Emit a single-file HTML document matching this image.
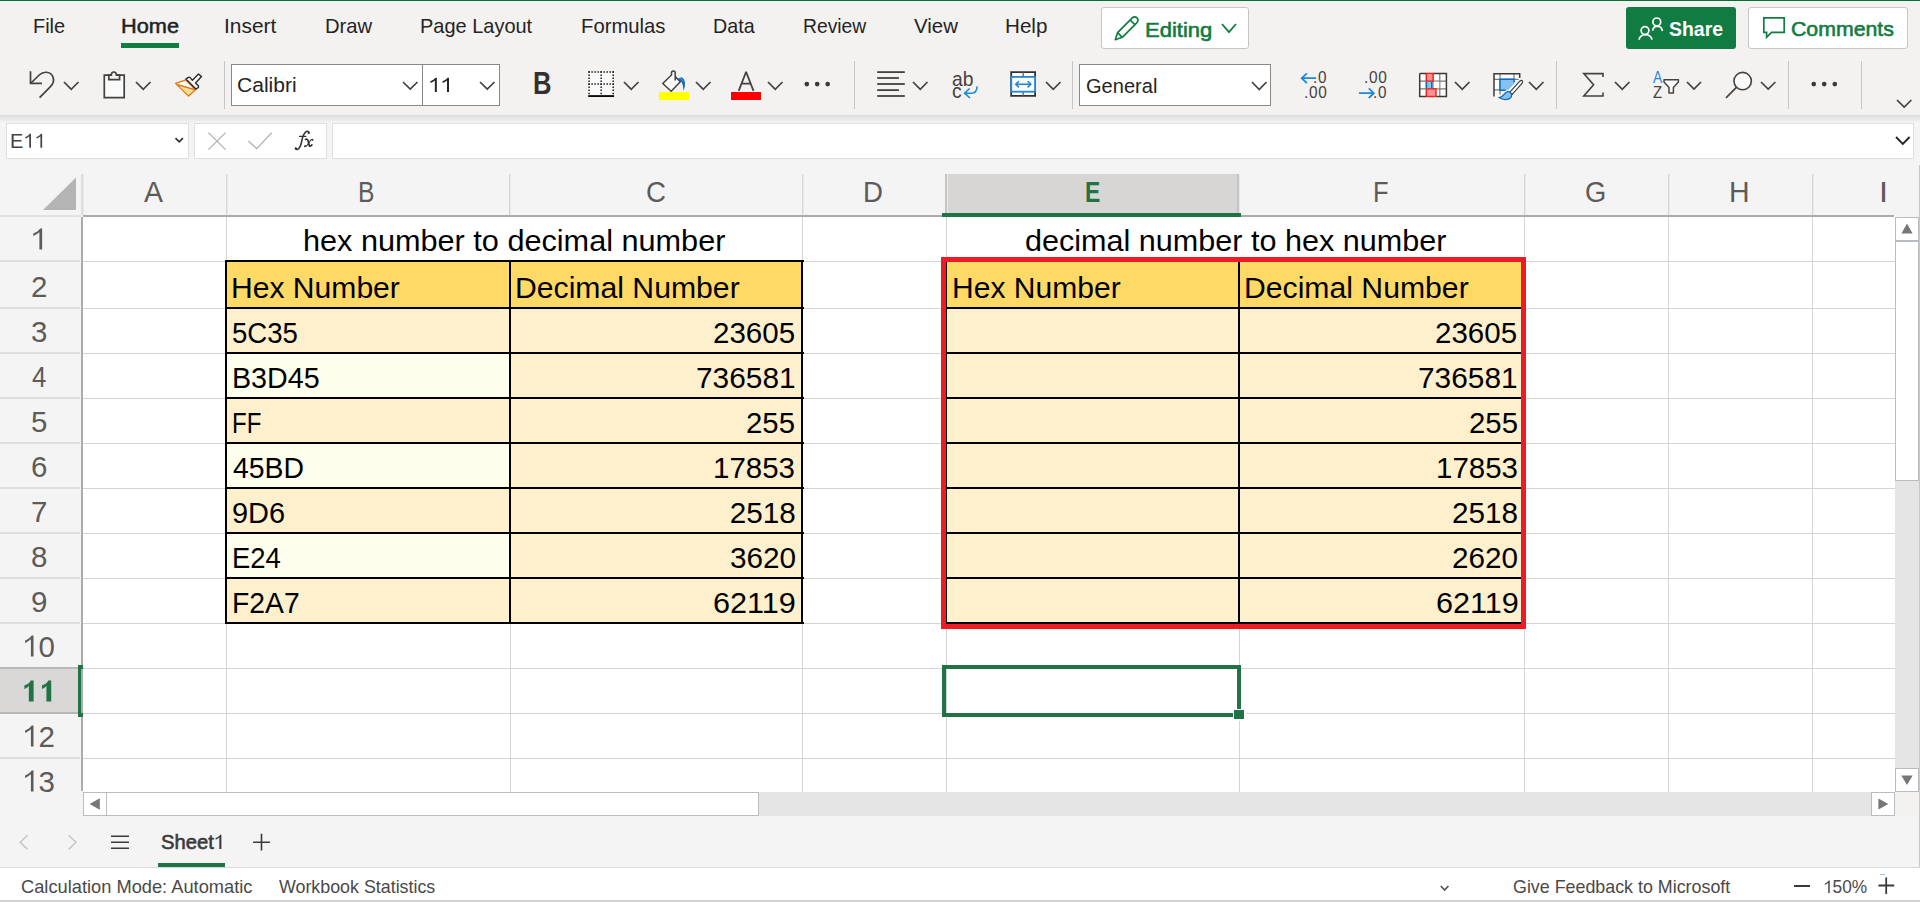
<!DOCTYPE html>
<html><head><meta charset="utf-8"><title>Excel</title>
<style>
html,body{margin:0;padding:0}
body{width:1920px;height:902px;overflow:hidden;position:relative;background:#f3f2f1;font-family:'Liberation Sans', sans-serif}
div,svg,span{position:absolute;display:block}
span{white-space:pre;line-height:1;transform-origin:0 0}
svg.o{position:static;display:inline-block;width:.556em;height:.8em;fill:currentColor;vertical-align:baseline}
</style></head>
<body>
<div style="left:0px;top:0px;width:1920px;height:1px;background:#00722f;"></div>
<div style="left:0px;top:1px;width:1920px;height:1px;background:#fcf7fc;"></div>
<div style="left:0px;top:2px;width:1920px;height:113px;background:#f3f2f1;"></div>
<div style="left:0px;top:115px;width:1920px;height:1px;background:#dadada;"></div>
<div style="left:0px;top:116px;width:1920px;height:7px;background:linear-gradient(#e1e1e1,#e6e6e6 30%,#f4f4f4);"></div>
<div style="left:0px;top:123px;width:1920px;height:51px;background:#f4f4f4;"></div>
<div style="left:121px;top:43px;width:58px;height:5px;background:#107c41;"></div>
<div style="left:1101px;top:7px;width:146px;height:40px;background:#fff;border:1px solid #c8c6c4;border-radius:3px"></div>
<svg style="left:1112px;top:14px;" width="30" height="28" viewBox="0 0 30 28"><g fill="none" stroke="#107c41" stroke-width="1.7" stroke-linejoin="round"><path d="M3.3 25.7 L5.6 18.6 L20.3 3.9 A3.3 3.3 0 0 1 25 8.6 L10.3 23.3 Z"/><path d="M5.6 18.6 L10.3 23.3"/><path d="M18.2 6 L22.9 10.7"/></g></svg>
<svg style="left:1219.9px;top:21.6px;" width="18" height="12.2" viewBox="0 0 18 12.2"><path d="M2 2 L9.0 10.2 L16 2" fill="none" stroke="#107c41" stroke-width="1.8"/></svg>
<div style="left:1626px;top:7px;width:110px;height:42px;background:#107c41;border-radius:3px"></div>
<svg style="left:1636px;top:14px;" width="30" height="28" viewBox="0 0 30 28"><g fill="none" stroke="#fff" stroke-width="1.7"><circle cx="20.8" cy="7.9" r="3.9"/><path d="M16.6 16.6 Q17.6 12.2 21.2 12.2 Q25.6 12.4 26.4 17"/><circle cx="9" cy="16.6" r="3.9"/><path d="M3.1 25.8 A6.4 5.2 0 0 1 15.9 25.8"/></g></svg>
<div style="left:1748px;top:7px;width:158px;height:40px;background:#fff;border:1px solid #c8c6c4;border-radius:3px"></div>
<svg style="left:1761px;top:15px;" width="28" height="26" viewBox="0 0 28 26"><path d="M2.8 2.8 H23.2 V17.3 H10.6 L5.6 22.3 V17.3 H2.8 Z" fill="none" stroke="#107c41" stroke-width="1.7"/></svg>
<svg style="left:27px;top:69px;" width="30" height="32" viewBox="0 0 30 32"><g fill="none" stroke="#444240" stroke-width="1.7"><path d="M3.5 2.3 V14.3 H15"/><path d="M4 14 L12.2 6 C16.5 2 23 2.3 25.6 7.2 C27.6 11.2 26 15.2 23 18.2 L12.6 28.6"/></g></svg>
<svg style="left:62.05px;top:79.95px;" width="18.5" height="11.3" viewBox="0 0 18.5 11.3"><path d="M2 2 L9.25 9.3 L16.5 2" fill="none" stroke="#444240" stroke-width="1.7"/></svg>
<svg style="left:101px;top:69px;" width="28" height="32" viewBox="0 0 28 32"><g stroke="#444240" stroke-width="1.7" fill="#fafafa"><path d="M3.3 6.2 H23.2 V28.6 H3.3 Z"/><path d="M7.8 10.7 V6.2 H10.3 A2.55 3.2 0 0 1 15.4 6.2 H18.6 V10.7 Z" fill="#f3f2f1"/></g></svg>
<svg style="left:134.05px;top:79.95px;" width="18.5" height="11.3" viewBox="0 0 18.5 11.3"><path d="M2 2 L9.25 9.3 L16.5 2" fill="none" stroke="#444240" stroke-width="1.7"/></svg>
<svg style="left:173px;top:71px;" width="32" height="28" viewBox="0 0 32 28"><path d="M2.6 12.3 L12.9 8.9 L22.5 18.8 L15.5 24.9 Z" fill="#fafafa" stroke="#e2760f" stroke-width="1.4" stroke-linejoin="round"/><path d="M6.4 15.4 L20.2 19.2 L15.5 23.9 Z" fill="#f9dc8a"/><path d="M4.6 13.8 L22 18.7" stroke="#e2760f" stroke-width="1.5" fill="none"/><path d="M12.9 7.9 L15.5 6.3 Q16.4 5.9 17.1 6.6 L19.4 9.3 L25.5 3 L28.5 5.6 L22.5 11.9 L25.3 14.7 Q25.8 15.6 25.3 16.5 L22.9 18.1 Z" fill="#fafafa" stroke="#2b2a29" stroke-width="1.4" stroke-linejoin="round"/></svg>
<div style="left:224px;top:61px;width:1px;height:47.5px;background:#c8c6c4;"></div>
<div style="left:231px;top:64px;width:267px;height:40px;background:#fff;border:1px solid #8a8886"></div>
<div style="left:422px;top:65px;width:1px;height:40px;background:#8a8886;"></div>
<svg style="left:400.95px;top:80.0px;" width="18.5" height="11" viewBox="0 0 18.5 11"><path d="M2 2 L9.25 9 L16.5 2" fill="none" stroke="#444240" stroke-width="1.7"/></svg>
<svg style="left:477.85px;top:80.0px;" width="18.5" height="11" viewBox="0 0 18.5 11"><path d="M2 2 L9.25 9 L16.5 2" fill="none" stroke="#444240" stroke-width="1.7"/></svg>
<svg style="left:586px;top:69px;" width="32" height="30" viewBox="0 0 32 30"><rect x="3.1" y="3.1" width="24.1" height="23" fill="#f9f9f9"/><g fill="none" stroke="#1f1e1d" stroke-width="1.5"><path d="M2.35 3.1 H27.95 M2.35 14.9 H27.95" stroke-dasharray="1.5 1.5125"/><path d="M3.1 2.35 V25.2 M15.15 2.35 V25.2 M27.2 2.35 V25.2" stroke-dasharray="1.5 1.543"/></g><path d="M2.2 27.06 H28.1" stroke="#000" stroke-width="1.8"/></svg>
<svg style="left:621.95px;top:79.85px;" width="18.5" height="11.3" viewBox="0 0 18.5 11.3"><path d="M2 2 L9.25 9.3 L16.5 2" fill="none" stroke="#444240" stroke-width="1.7"/></svg>
<svg style="left:657px;top:68px;" width="36" height="34" viewBox="0 0 36 34"><path d="M5.8 15.5 L14.5 7 H18.2 V8.6 L23.3 13.7 L14.2 23.2 Z" fill="#fafafa"/><path d="M18.2 8.6 L23.3 13.7 L14.2 23.2 L5.8 15.5 L14.5 7 V4.9 A1.85 1.85 0 0 1 18.2 4.9 V12.4" fill="none" stroke="#444240" stroke-width="1.5" stroke-linejoin="miter"/><path d="M20.7 11.2 C22.5 8.9 25.6 8.6 27.1 11.5 C28.7 15 27.8 19.5 26.6 22.8 C26.1 18.5 25.7 15.6 24.2 13.8 C23.2 12.6 22 12 20.7 11.2 Z" fill="#0f64c0"/><path d="M22.6 10.8 C24.2 10.4 25.6 11.4 26 13.6" fill="none" stroke="#5aa2e6" stroke-width="1"/><rect x="2" y="24.1" width="30.2" height="8" fill="#ffff00"/></svg>
<svg style="left:694.25px;top:79.85px;" width="18.5" height="11.3" viewBox="0 0 18.5 11.3"><path d="M2 2 L9.25 9.3 L16.5 2" fill="none" stroke="#444240" stroke-width="1.7"/></svg>
<svg style="left:735px;top:68px;" width="24" height="26" viewBox="0 0 24 26"><path d="M3.7 22.9 L11.1 3.9 L18.5 22.9 M6.4 15.7 H15.8" fill="none" stroke-linejoin="bevel" stroke="#444240" stroke-width="1.75"/></svg>
<div style="left:731px;top:92px;width:30px;height:8px;background:#ff0000;"></div>
<svg style="left:765.95px;top:79.85px;" width="18.5" height="11.3" viewBox="0 0 18.5 11.3"><path d="M2 2 L9.25 9.3 L16.5 2" fill="none" stroke="#444240" stroke-width="1.7"/></svg>
<svg style="left:800px;top:78px;" width="34" height="12" viewBox="0 0 34 12"><g fill="#3b3a39"><circle cx="6.8" cy="6.1" r="2.35"/><circle cx="17.2" cy="6.1" r="2.35"/><circle cx="27.7" cy="6.1" r="2.35"/></g></svg>
<div style="left:854px;top:61px;width:1px;height:47.5px;background:#c8c6c4;"></div>
<svg style="left:875px;top:69px;" width="32" height="30" viewBox="0 0 32 30"><g stroke="#444240" stroke-width="1.8"><path d="M2.2 3.1 H29.8"/><path d="M2.2 9 H23.9"/><path d="M2.2 15 H29.8"/><path d="M2.2 21.1 H23.9"/><path d="M2.2 27 H29.8"/></g></svg>
<svg style="left:911.25px;top:79.65px;" width="18.5" height="11.3" viewBox="0 0 18.5 11.3"><path d="M2 2 L9.25 9.3 L16.5 2" fill="none" stroke="#444240" stroke-width="1.7"/></svg>
<svg style="left:962px;top:84px;" width="18" height="16" viewBox="0 0 18 16"><path d="M2.6 9.2 H9.5 C13 9.2 15.2 6.6 15 2.4 M7.6 4.5 L2.6 9.2 L8 14" fill="none" stroke="#1e88d6" stroke-width="1.6"/></svg>
<svg style="left:1008px;top:69px;" width="30" height="30" viewBox="0 0 30 30"><path d="M3.2 3.2 H27.1 V26.9 H3.2 Z" fill="#fdfdfd" stroke="#323130" stroke-width="1.8"/><path d="M15.15 3.2 V26.9" stroke="#605e5c" stroke-width="1.3"/><rect x="3.25" y="7.9" width="23.8" height="14.8" fill="#fafafa" stroke="#1e88d6" stroke-width="1.8"/><path d="M8 15.3 H22.6 M11 12.2 L7.8 15.3 L11 18.4 M19.6 12.2 L22.8 15.3 L19.6 18.4" fill="none" stroke="#1e88d6" stroke-width="1.6"/></svg>
<svg style="left:1044.05px;top:79.65px;" width="18.5" height="11.3" viewBox="0 0 18.5 11.3"><path d="M2 2 L9.25 9.3 L16.5 2" fill="none" stroke="#444240" stroke-width="1.7"/></svg>
<div style="left:1072px;top:61px;width:1px;height:47.5px;background:#c8c6c4;"></div>
<div style="left:1079px;top:64px;width:190px;height:40px;background:#fff;border:1px solid #8a8886"></div>
<svg style="left:1249.75px;top:79.8px;" width="18.5" height="11.6" viewBox="0 0 18.5 11.6"><path d="M2 2 L9.25 9.6 L16.5 2" fill="none" stroke="#444240" stroke-width="1.7"/></svg>
<svg style="left:1299px;top:70px;" width="20" height="16" viewBox="0 0 20 16"><path d="M2.6 8.2 H17.1 M7.9 3.3 L2.7 8.2 L7.9 13.1" fill="none" stroke="#1e88d6" stroke-width="1.8"/></svg>
<svg style="left:1357px;top:85px;" width="20" height="16" viewBox="0 0 20 16"><path d="M2 8.2 H16.8 M11.8 3.4 L16.8 8.2 L11.8 13" fill="none" stroke="#1e88d6" stroke-width="1.8"/></svg>
<svg style="left:1417px;top:70px;" width="32" height="30" viewBox="0 0 32 30"><rect x="2.7" y="3.4" width="26.7" height="23.1" fill="#fdfdfd"/><g fill="none" stroke="#7a7a7a" stroke-width="1.2"><path d="M9.4 3.4 V26.5 M16.1 3.4 V26.5 M22.8 3.4 V26.5 M2.7 11.1 H29.4 M2.7 18.8 H29.4"/></g><rect x="16.8" y="11.8" width="5.4" height="6.3" fill="#fdfdfd"/><rect x="9.4" y="3.4" width="6.7" height="7.7" fill="#ff9097" stroke="#e8261c" stroke-width="1.4"/><rect x="9.4" y="18.8" width="9.6" height="7.7" fill="#ff9097" stroke="#e8261c" stroke-width="1.4"/><rect x="9.4" y="11.8" width="5.4" height="6.3" fill="#86c1f0"/><path d="M9.4 11.8 V18.1 M14.8 11.8 V18.1" stroke="#0f6cbd" stroke-width="1.5" fill="none"/><path d="M2.7 3.4 H9 M16.6 3.4 H29.4 V26.5 H19.4 M9 26.5 H2.7 V3.4" fill="none" stroke="#3b3a39" stroke-width="1.5"/></svg>
<svg style="left:1453.15px;top:79.85px;" width="18.5" height="11.3" viewBox="0 0 18.5 11.3"><path d="M2 2 L9.25 9.3 L16.5 2" fill="none" stroke="#444240" stroke-width="1.7"/></svg>
<svg style="left:1491px;top:70px;" width="34" height="32" viewBox="0 0 34 32"><path d="M3 3.7 H28.7 V9.3 H23 V20 H9 V26.5 H3 Z" fill="#fdfdfd"/><g fill="none" stroke="#7a7a7a" stroke-width="1.2"><path d="M9 3.7 V24.6 M23 3.7 V9 M3 9.3 H27.6 M3 19.9 H9"/></g><path d="M9 9.3 H23.1 V14 L17 20.25 H9 Z" fill="#86c1f0"/><path d="M23.1 12.6 V9.3 H9 V20.25 H14.6" fill="none" stroke="#0f6cbd" stroke-width="1.5"/><path d="M3 26.5 V3.7 H28.7 V8" fill="none" stroke="#3b3a39" stroke-width="1.5"/><path d="M31 10.6 L19.4 23.6" stroke="#f3f2f1" stroke-width="5" stroke-linecap="round"/><path d="M30.9 10.5 Q32.2 11.3 31 13.4 L21.2 24.4 L18.6 22.4 L28.6 11.4 Q30 10 30.9 10.5 Z" fill="#fdfdfd" stroke="#3b3a39" stroke-width="1.1" stroke-linejoin="round"/><path d="M16.6 21.6 C13 22.4 13.6 26.4 8.2 27.6 C12.6 31 20.6 30 20.6 25 C20.6 23.2 18.6 21.4 16.6 21.6 Z" fill="#86c1f0" stroke="#0f6cbd" stroke-width="1.3"/></svg>
<svg style="left:1527.15px;top:79.85px;" width="18.5" height="11.3" viewBox="0 0 18.5 11.3"><path d="M2 2 L9.25 9.3 L16.5 2" fill="none" stroke="#444240" stroke-width="1.7"/></svg>
<div style="left:1556px;top:61px;width:1px;height:47.5px;background:#c8c6c4;"></div>
<svg style="left:1580px;top:70px;" width="28" height="30" viewBox="0 0 28 30"><path d="M23 7 V3.6 H3.8 L13.6 14.8 L3.8 26 H23 V22.6" fill="none" stroke="#444240" stroke-width="1.6"/></svg>
<svg style="left:1612.95px;top:79.85px;" width="18.5" height="11.3" viewBox="0 0 18.5 11.3"><path d="M2 2 L9.25 9.3 L16.5 2" fill="none" stroke="#444240" stroke-width="1.7"/></svg>
<svg style="left:1661px;top:76px;" width="20" height="20" viewBox="0 0 20 20"><path d="M3 3.8 H17.4 V6 L12.4 11.4 V17 H8 V11.4 L3 6 Z" fill="#fafafa" stroke="#444240" stroke-width="1.5" stroke-linejoin="round"/></svg>
<svg style="left:1685.2px;top:79.9px;" width="18" height="11" viewBox="0 0 18 11"><path d="M2 2 L9.0 9 L16 2" fill="none" stroke="#444240" stroke-width="1.7"/></svg>
<svg style="left:1723px;top:69px;" width="32" height="32" viewBox="0 0 32 32"><circle cx="19.65" cy="12.1" r="8.7" fill="#fafafa" stroke="#444240" stroke-width="1.6"/><path d="M13.4 18.4 L3 28.8" stroke="#444240" stroke-width="1.7"/></svg>
<svg style="left:1759.1px;top:79.9px;" width="18.4" height="11" viewBox="0 0 18.4 11"><path d="M2 2 L9.2 9 L16.4 2" fill="none" stroke="#444240" stroke-width="1.7"/></svg>
<div style="left:1788px;top:61px;width:1px;height:47.5px;background:#c8c6c4;"></div>
<svg style="left:1807px;top:78px;" width="34" height="12" viewBox="0 0 34 12"><g fill="#3b3a39"><circle cx="6.75" cy="6.1" r="2.35"/><circle cx="17.2" cy="6.1" r="2.35"/><circle cx="27.8" cy="6.1" r="2.35"/></g></svg>
<div style="left:1861px;top:61px;width:1px;height:47.5px;background:#c8c6c4;"></div>
<svg style="left:1895.0px;top:98.0px;" width="18.4" height="11" viewBox="0 0 18.4 11"><path d="M2 2 L9.2 9 L16.4 2" fill="none" stroke="#444240" stroke-width="1.7"/></svg>
<div style="left:6px;top:123px;width:181px;height:34px;background:#fff;border:1px solid #e1dfdd"></div>
<svg style="left:173px;top:135px;" width="12" height="10" viewBox="0 0 12 10"><path d="M2.5 3.2 L6.2 6.9 L9.9 3.2" fill="none" stroke="#323130" stroke-width="1.7"/></svg>
<div style="left:194px;top:123px;width:131px;height:34px;background:#fff;border:1px solid #e1dfdd"></div>
<svg style="left:206px;top:130px;" width="22" height="22" viewBox="0 0 22 22"><path d="M2.4 2.6 L19.6 19.6 M19.6 2.6 L2.4 19.6" stroke="#b3b0ad" stroke-width="1.3" fill="none"/></svg>
<svg style="left:246px;top:130px;" width="28" height="22" viewBox="0 0 28 22"><path d="M2.4 11 L10.8 18.6 L25.6 2.8" stroke="#b3b0ad" stroke-width="1.3" fill="none"/></svg>
<svg style="left:292px;top:128px;" width="24" height="26" viewBox="0 0 24 26"><g fill="none" stroke="#323130" stroke-linecap="round" stroke-linejoin="round"><path d="M16.9 4.7 C16.5 3.2 15.1 2.9 14.1 3.7 C12.6 4.9 11.5 7 10.9 8.6 C10.2 10.6 9.9 12.6 9.3 15 C8.6 18 7.6 20.3 5.8 21.2 C4.7 21.7 3.8 21.2 3.5 20.5" stroke-width="1.55"/><path d="M7.5 8.3 H13.9" stroke-width="1.2"/><path d="M13.5 11.4 C14.7 10.8 15.6 11.2 16 12.5 L17.2 17.3 C17.5 18.6 18.5 18.5 19.9 16.9" stroke-width="1.7"/><path d="M20.6 11.7 C19.6 11.1 18.8 11.8 18.2 12.8 L15.6 16.7 C14.8 17.8 13.9 18.8 12.9 18.3" stroke-width="1.1"/></g><g fill="#323130"><circle cx="16.7" cy="4.9" r="1.05"/><circle cx="3.9" cy="20.5" r="1.15"/><circle cx="20.5" cy="11.8" r="0.95"/><circle cx="13" cy="18.2" r="0.95"/></g></svg>
<div style="left:332px;top:123px;width:1579.5px;height:34px;background:#fff;border:1px solid #e1dfdd"></div>
<svg style="left:1894.3px;top:134.8px;" width="17.6" height="11" viewBox="0 0 17.6 11"><path d="M2 2 L8.8 9 L15.6 2" fill="none" stroke="#252423" stroke-width="1.8"/></svg>
<div style="left:0px;top:174px;width:1920px;height:43px;background:#f4f4f4;"></div>
<div style="left:0px;top:217px;width:81px;height:575px;background:#f4f4f4;"></div>
<div style="left:83px;top:217px;width:1812px;height:575px;background:#fff;"></div>
<svg style="left:40px;top:175px;" width="40" height="38" viewBox="0 0 40 38"><path d="M36 2.4 V35 H3 Z" fill="#b4b4b4"/></svg>
<div style="left:947px;top:174px;width:291px;height:39px;background:#d7d6d5;"></div>
<div style="left:0px;top:669px;width:78px;height:43px;background:#d9d8d7;"></div>
<div style="left:82px;top:174px;width:1px;height:41px;background:#d6d6d6;"></div>
<div style="left:83px;top:174px;width:1px;height:41px;background:#e9e9e9;"></div>
<div style="left:226px;top:174px;width:1px;height:41px;background:#d6d6d6;"></div>
<div style="left:227px;top:174px;width:1px;height:41px;background:#e9e9e9;"></div>
<div style="left:509px;top:174px;width:1px;height:41px;background:#d6d6d6;"></div>
<div style="left:510px;top:174px;width:1px;height:41px;background:#e9e9e9;"></div>
<div style="left:802px;top:174px;width:1px;height:41px;background:#d6d6d6;"></div>
<div style="left:803px;top:174px;width:1px;height:41px;background:#e9e9e9;"></div>
<div style="left:946px;top:174px;width:1px;height:41px;background:#d6d6d6;"></div>
<div style="left:947px;top:174px;width:1px;height:41px;background:#e9e9e9;"></div>
<div style="left:1238px;top:174px;width:1px;height:41px;background:#d6d6d6;"></div>
<div style="left:1239px;top:174px;width:1px;height:41px;background:#e9e9e9;"></div>
<div style="left:1524px;top:174px;width:1px;height:41px;background:#d6d6d6;"></div>
<div style="left:1525px;top:174px;width:1px;height:41px;background:#e9e9e9;"></div>
<div style="left:1668px;top:174px;width:1px;height:41px;background:#d6d6d6;"></div>
<div style="left:1669px;top:174px;width:1px;height:41px;background:#e9e9e9;"></div>
<div style="left:1812px;top:174px;width:1px;height:41px;background:#d6d6d6;"></div>
<div style="left:1813px;top:174px;width:1px;height:41px;background:#e9e9e9;"></div>
<div style="left:945px;top:174px;width:2px;height:39px;background:#c4c4c4;"></div>
<div style="left:1237px;top:174px;width:2px;height:39px;background:#c4c4c4;"></div>
<div style="left:0px;top:260px;width:80px;height:2px;background:#dedede;"></div>
<div style="left:0px;top:307px;width:80px;height:2px;background:#dedede;"></div>
<div style="left:0px;top:352px;width:80px;height:2px;background:#dedede;"></div>
<div style="left:0px;top:397px;width:80px;height:2px;background:#dedede;"></div>
<div style="left:0px;top:442px;width:80px;height:2px;background:#dedede;"></div>
<div style="left:0px;top:487px;width:80px;height:2px;background:#dedede;"></div>
<div style="left:0px;top:532px;width:80px;height:2px;background:#dedede;"></div>
<div style="left:0px;top:577px;width:80px;height:2px;background:#dedede;"></div>
<div style="left:0px;top:622px;width:80px;height:2px;background:#dedede;"></div>
<div style="left:0px;top:667px;width:80px;height:2px;background:#dedede;"></div>
<div style="left:0px;top:712px;width:80px;height:2px;background:#dedede;"></div>
<div style="left:0px;top:757px;width:80px;height:2px;background:#dedede;"></div>
<div style="left:226px;top:217px;width:1px;height:575px;background:#d4d4d4;"></div>
<div style="left:510px;top:262px;width:1px;height:530px;background:#d4d4d4;"></div>
<div style="left:802px;top:217px;width:1px;height:575px;background:#d4d4d4;"></div>
<div style="left:946px;top:217px;width:1px;height:575px;background:#d4d4d4;"></div>
<div style="left:1239px;top:262px;width:1px;height:530px;background:#d4d4d4;"></div>
<div style="left:1524px;top:217px;width:1px;height:575px;background:#d4d4d4;"></div>
<div style="left:1668px;top:217px;width:1px;height:575px;background:#d4d4d4;"></div>
<div style="left:1812px;top:217px;width:1px;height:575px;background:#d4d4d4;"></div>
<div style="left:83px;top:261px;width:1812px;height:1px;background:#d4d4d4;"></div>
<div style="left:83px;top:308px;width:1812px;height:1px;background:#d4d4d4;"></div>
<div style="left:83px;top:353px;width:1812px;height:1px;background:#d4d4d4;"></div>
<div style="left:83px;top:398px;width:1812px;height:1px;background:#d4d4d4;"></div>
<div style="left:83px;top:443px;width:1812px;height:1px;background:#d4d4d4;"></div>
<div style="left:83px;top:488px;width:1812px;height:1px;background:#d4d4d4;"></div>
<div style="left:83px;top:533px;width:1812px;height:1px;background:#d4d4d4;"></div>
<div style="left:83px;top:578px;width:1812px;height:1px;background:#d4d4d4;"></div>
<div style="left:83px;top:623px;width:1812px;height:1px;background:#d4d4d4;"></div>
<div style="left:83px;top:668px;width:1812px;height:1px;background:#d4d4d4;"></div>
<div style="left:83px;top:713px;width:1812px;height:1px;background:#d4d4d4;"></div>
<div style="left:83px;top:758px;width:1812px;height:1px;background:#d4d4d4;"></div>
<div style="left:83px;top:215px;width:1811px;height:2px;background:#ababab;"></div>
<div style="left:0px;top:215px;width:81px;height:2px;background:#e2e2e2;"></div>
<div style="left:81px;top:217px;width:2px;height:574px;background:#ababab;"></div>
<div style="left:81px;top:174px;width:2px;height:41px;background:#dedede;"></div>
<div style="left:942px;top:213px;width:299px;height:4px;background:#217346;"></div>
<div style="left:0px;top:667px;width:78px;height:2px;background:#b8b8b8;"></div>
<div style="left:0px;top:712px;width:78px;height:2px;background:#b8b8b8;"></div>
<div style="left:78px;top:665px;width:5px;height:4px;background:#217346;"></div>
<div style="left:78px;top:713px;width:5px;height:4px;background:#217346;"></div>
<div style="left:78px;top:669px;width:3.4px;height:44px;background:#217346;"></div>
<div style="left:226px;top:261px;width:576px;height:47px;background:#ffd966;"></div>
<div style="left:226px;top:308px;width:576px;height:315px;background:#fff0cd;"></div>
<div style="left:226px;top:353px;width:284px;height:45px;background:#fefeec;"></div>
<div style="left:226px;top:443px;width:284px;height:45px;background:#fefeec;"></div>
<div style="left:226px;top:533px;width:284px;height:45px;background:#fefeec;"></div>
<div style="left:225px;top:260px;width:2px;height:364px;background:#000;"></div>
<div style="left:509px;top:260px;width:2px;height:364px;background:#000;"></div>
<div style="left:801px;top:260px;width:2px;height:364px;background:#000;"></div>
<div style="left:225px;top:260px;width:579px;height:2px;background:#000;"></div>
<div style="left:225px;top:307px;width:579px;height:2px;background:#000;"></div>
<div style="left:225px;top:352px;width:579px;height:2px;background:#000;"></div>
<div style="left:225px;top:397px;width:579px;height:2px;background:#000;"></div>
<div style="left:225px;top:442px;width:579px;height:2px;background:#000;"></div>
<div style="left:225px;top:487px;width:579px;height:2px;background:#000;"></div>
<div style="left:225px;top:532px;width:579px;height:2px;background:#000;"></div>
<div style="left:225px;top:577px;width:579px;height:2px;background:#000;"></div>
<div style="left:225px;top:622px;width:579px;height:2px;background:#000;"></div>
<div style="left:946px;top:261px;width:578px;height:47px;background:#ffd966;"></div>
<div style="left:946px;top:308px;width:578px;height:315px;background:#fff0cd;"></div>
<div style="left:945px;top:260px;width:2px;height:364px;background:#000;"></div>
<div style="left:1238px;top:260px;width:2px;height:364px;background:#000;"></div>
<div style="left:1523px;top:260px;width:2px;height:364px;background:#000;"></div>
<div style="left:945px;top:260px;width:581px;height:2px;background:#000;"></div>
<div style="left:945px;top:307px;width:581px;height:2px;background:#000;"></div>
<div style="left:945px;top:352px;width:581px;height:2px;background:#000;"></div>
<div style="left:945px;top:397px;width:581px;height:2px;background:#000;"></div>
<div style="left:945px;top:442px;width:581px;height:2px;background:#000;"></div>
<div style="left:945px;top:487px;width:581px;height:2px;background:#000;"></div>
<div style="left:945px;top:532px;width:581px;height:2px;background:#000;"></div>
<div style="left:945px;top:577px;width:581px;height:2px;background:#000;"></div>
<div style="left:945px;top:622px;width:581px;height:2px;background:#000;"></div>
<div style="left:941px;top:257px;width:585px;height:5px;background:#ed1c24;"></div>
<div style="left:941px;top:624px;width:585px;height:5px;background:#ed1c24;"></div>
<div style="left:941px;top:257px;width:5px;height:372px;background:#ed1c24;"></div>
<div style="left:1521px;top:257px;width:5px;height:372px;background:#ed1c24;"></div>
<div style="left:942px;top:665px;width:291px;height:44px;background:transparent;border:4px solid #217346;z-index:6"></div>
<div style="left:1232.5px;top:708.5px;width:13px;height:12px;background:#fff;z-index:7"></div>
<div style="left:1234px;top:710px;width:10px;height:9px;background:#217346;z-index:8"></div>
<div style="left:1895px;top:217px;width:25px;height:575px;background:#f4f4f4;"></div>
<div style="left:1895px;top:241px;width:24px;height:528px;background:#e5e5e5;"></div>
<div style="left:1895px;top:217px;width:22px;height:22px;background:#fff;border:1px solid #b9bdc1"></div>
<svg style="left:1899px;top:221px;" width="16" height="16" viewBox="0 0 16 16"><path d="M8 2.4 L13.6 12.4 H2.4 Z" fill="#777"/></svg>
<div style="left:1895px;top:241px;width:22px;height:238px;background:#fff;border:1px solid #b9bdc1"></div>
<div style="left:1895px;top:768px;width:22px;height:22px;background:#fff;border:1px solid #b9bdc1"></div>
<svg style="left:1899px;top:772px;" width="16" height="16" viewBox="0 0 16 16"><path d="M2.3 3.4 H13.7 L8 13 Z" fill="#777"/></svg>
<div style="left:1919px;top:165px;width:1px;height:702px;background:#c8c8c8;z-index:9;"></div>
<div style="left:83px;top:792px;width:1812px;height:24px;background:#e5e5e5;"></div>
<div style="left:83px;top:792px;width:22px;height:22px;background:#fff;border:1px solid #b9bdc1"></div>
<svg style="left:87px;top:796px;" width="16" height="16" viewBox="0 0 16 16"><path d="M2.6 8 L12.8 2.3 V13.7 Z" fill="#777"/></svg>
<div style="left:106px;top:792px;width:651px;height:22px;background:#fff;border:1px solid #b9bdc1"></div>
<div style="left:1871px;top:792px;width:22px;height:22px;background:#fff;border:1px solid #b9bdc1"></div>
<svg style="left:1875px;top:796px;" width="16" height="16" viewBox="0 0 16 16"><path d="M13.4 8 L3.4 2.4 V13.6 Z" fill="#777"/></svg>
<div style="left:0px;top:792px;width:83px;height:24px;background:#f4f4f4;z-index:6;"></div>
<div style="left:0px;top:816px;width:1920px;height:51px;background:#f4f4f4;z-index:6;"></div>
<div style="left:0px;top:867px;width:1920px;height:1px;background:#d9d9d9;z-index:6;"></div>
<div style="left:0px;top:868px;width:1920px;height:32px;background:#fff;z-index:6;"></div>
<div style="left:0px;top:900px;width:1920px;height:2px;background:#d2d2d2;z-index:6;"></div>
<svg style="left:17px;top:832px;z-index:7;" width="14" height="20" viewBox="0 0 14 20"><path d="M10.6 3.2 L3.2 10.3 L10.6 17.4" fill="none" stroke="#c8c6c4" stroke-width="1.5"/></svg>
<svg style="left:65px;top:832px;z-index:7;" width="14" height="20" viewBox="0 0 14 20"><path d="M3.6 3.2 L11 10.3 L3.6 17.4" fill="none" stroke="#c8c6c4" stroke-width="1.5"/></svg>
<svg style="left:109px;top:832px;z-index:7;" width="22" height="20" viewBox="0 0 22 20"><path d="M2 4.2 H20 M2 10.2 H20 M2 16.2 H20" stroke="#3b3a39" stroke-width="1.6"/></svg>
<div style="left:158px;top:863px;width:67px;height:4px;background:#217346;z-index:7;"></div>
<svg style="left:251px;top:832px;z-index:7;" width="22" height="22" viewBox="0 0 22 22"><path d="M10.5 1.8 V18.6 M2.1 10.2 H18.9" stroke="#3b3a39" stroke-width="1.6"/></svg>
<svg style="left:1438px;top:883px;z-index:7;" width="14" height="12" viewBox="0 0 14 12"><path d="M2.8 3 L6.6 7 L10.4 3" fill="none" stroke="#55534f" stroke-width="1.7"/></svg>
<div style="left:1794px;top:885px;width:16px;height:2px;background:#3b3a39;z-index:7;"></div>
<svg style="left:1877px;top:876px;z-index:7;" width="20" height="20" viewBox="0 0 20 20"><path d="M9.2 1.6 V17.9 M1.4 9.5 H17.2" stroke="#3b3a39" stroke-width="1.8"/></svg>
<div style="left:1880px;top:874px;width:5px;height:1px;background:#9cc8ef;z-index:7;"></div>
<span style="left:33.05px;top:15.22px;font-size:21px;color:#252423;z-index:5;transform:scaleX(0.9500);">File</span>
<span style="left:120.96px;top:15.22px;font-size:21px;color:#201f1e;z-index:5;-webkit-text-stroke:0.5px #201f1e;transform:scaleX(1.0364);">Home</span>
<span style="left:224.26px;top:15.22px;font-size:21px;color:#252423;z-index:5;transform:scaleX(0.9951);">Insert</span>
<span style="left:324.79px;top:15.22px;font-size:21px;color:#252423;z-index:5;transform:scaleX(0.9635);">Draw</span>
<span style="left:420.30px;top:15.22px;font-size:21px;color:#252423;z-index:5;transform:scaleX(0.9509);">Page Layout</span>
<span style="left:581.03px;top:15.22px;font-size:21px;color:#252423;z-index:5;transform:scaleX(0.9651);">Formulas</span>
<span style="left:712.81px;top:15.22px;font-size:21px;color:#252423;z-index:5;transform:scaleX(0.9375);">Data</span>
<span style="left:803.33px;top:15.22px;font-size:21px;color:#252423;z-index:5;transform:scaleX(0.9191);">Review</span>
<span style="left:914.25px;top:15.22px;font-size:21px;color:#252423;z-index:5;transform:scaleX(0.9722);">View</span>
<span style="left:1005.27px;top:15.22px;font-size:21px;color:#252423;z-index:5;transform:scaleX(0.9821);">Help</span>
<span style="left:1144.95px;top:19.32px;font-size:21px;color:#107c41;z-index:5;-webkit-text-stroke:0.6px #107c41;transform:scaleX(1.0484);">Editing</span>
<span style="left:1668.75px;top:19.45px;font-size:20.5px;color:#fff;z-index:5;font-weight:700;transform:scaleX(0.9482);">Share</span>
<span style="left:1791.46px;top:19.45px;font-size:20.5px;color:#107c41;z-index:5;-webkit-text-stroke:0.6px #107c41;transform:scaleX(1.0378);">Comments</span>
<span style="left:236.97px;top:75.15px;font-size:20.5px;color:#252423;z-index:5;transform:scaleX(1.0268);">Calibri</span>
<span style="left:427.99px;top:75.15px;font-size:20.5px;color:#252423;z-index:5;transform:scaleX(1.1059);"><svg class="o" viewBox="0 -0.8 0.556 0.8"><path d="M0.390 0V-0.716H0.328C0.280 -0.64 0.200 -0.585 0.105 -0.548V-0.463C0.170 -0.488 0.250 -0.533 0.302 -0.585V0Z"/></svg><svg class="o" viewBox="0 -0.8 0.556 0.8"><path d="M0.390 0V-0.716H0.328C0.280 -0.64 0.200 -0.585 0.105 -0.548V-0.463C0.170 -0.488 0.250 -0.533 0.302 -0.585V0Z"/></svg></span>
<span style="left:532.63px;top:68.00px;font-size:30.6px;color:#323130;z-index:5;font-weight:700;transform:scaleX(0.8368);">B</span>
<span style="left:952.15px;top:69.66px;font-size:19.3px;color:#444240;z-index:5;transform:scaleX(0.9975);">ab</span>
<span style="left:952.00px;top:81.76px;font-size:19.3px;color:#444240;z-index:5;">c</span>
<span style="left:1085.92px;top:75.50px;font-size:20.5px;color:#252423;z-index:5;transform:scaleX(0.9789);">General</span>
<span style="left:1313.20px;top:69.31px;font-size:17px;color:#444240;z-index:5;letter-spacing:0.8px;transform:scaleX(0.9000);">.0</span>
<span style="left:1304.10px;top:84.11px;font-size:17px;color:#444240;z-index:5;letter-spacing:0.8px;transform:scaleX(0.9042);">.00</span>
<span style="left:1364.19px;top:69.31px;font-size:17px;color:#444240;z-index:5;letter-spacing:0.8px;transform:scaleX(0.9062);">.00</span>
<span style="left:1373.40px;top:84.11px;font-size:17px;color:#444240;z-index:5;letter-spacing:0.8px;transform:scaleX(0.8964);">.0</span>
<span style="left:1653.30px;top:70.38px;font-size:16.8px;color:#2b88d8;z-index:5;transform:scaleX(0.8273);">A</span>
<span style="left:1653.30px;top:85.38px;font-size:16.8px;color:#444240;z-index:5;transform:scaleX(0.8900);">Z</span>
<span style="left:10.23px;top:131.81px;font-size:19.6px;color:#444;z-index:5;transform:scaleX(1.0161);">E<svg class="o" viewBox="0 -0.8 0.556 0.8"><path d="M0.390 0V-0.716H0.328C0.280 -0.64 0.200 -0.585 0.105 -0.548V-0.463C0.170 -0.488 0.250 -0.533 0.302 -0.585V0Z"/></svg><svg class="o" viewBox="0 -0.8 0.556 0.8"><path d="M0.390 0V-0.716H0.328C0.280 -0.64 0.200 -0.585 0.105 -0.548V-0.463C0.170 -0.488 0.250 -0.533 0.302 -0.585V0Z"/></svg></span>
<span style="left:144.00px;top:177.41px;font-size:30px;color:#5d5b59;z-index:5;transform:scaleX(0.9500);">A</span>
<span style="left:358.35px;top:177.41px;font-size:30px;color:#5d5b59;z-index:5;transform:scaleX(0.8235);">B</span>
<span style="left:645.58px;top:177.41px;font-size:30px;color:#5d5b59;z-index:5;transform:scaleX(0.9211);">C</span>
<span style="left:863.16px;top:177.41px;font-size:30px;color:#5d5b59;z-index:5;transform:scaleX(0.9211);">D</span>
<span style="left:1084.72px;top:177.20px;font-size:30px;color:#217346;z-index:5;font-weight:700;transform:scaleX(0.7647);">E</span>
<span style="left:1372.81px;top:177.41px;font-size:30px;color:#5d5b59;z-index:5;transform:scaleX(0.8467);">F</span>
<span style="left:1585.49px;top:177.41px;font-size:30px;color:#5d5b59;z-index:5;transform:scaleX(0.9100);">G</span>
<span style="left:1729.30px;top:177.41px;font-size:30px;color:#5d5b59;z-index:5;transform:scaleX(0.9500);">H</span>
<span style="left:1878.50px;top:177.41px;font-size:30px;color:#5d5b59;z-index:5;transform:scaleX(1.0833);">I</span>
<span style="left:30.33px;top:224.53px;font-size:29.5px;color:#5d5b59;z-index:5;transform:scaleX(1.0556);"><svg class="o" viewBox="0 -0.8 0.556 0.8"><path d="M0.390 0V-0.716H0.328C0.280 -0.64 0.200 -0.585 0.105 -0.548V-0.463C0.170 -0.488 0.250 -0.533 0.302 -0.585V0Z"/></svg></span>
<span style="left:31.00px;top:271.53px;font-size:29.5px;color:#5d5b59;z-index:5;">2</span>
<span style="left:31.00px;top:316.53px;font-size:29.5px;color:#5d5b59;z-index:5;">3</span>
<span style="left:32.00px;top:361.53px;font-size:29.5px;color:#5d5b59;z-index:5;transform:scaleX(0.8750);">4</span>
<span style="left:31.00px;top:406.53px;font-size:29.5px;color:#5d5b59;z-index:5;">5</span>
<span style="left:31.00px;top:451.53px;font-size:29.5px;color:#5d5b59;z-index:5;">6</span>
<span style="left:31.00px;top:496.53px;font-size:29.5px;color:#5d5b59;z-index:5;">7</span>
<span style="left:31.00px;top:541.53px;font-size:29.5px;color:#5d5b59;z-index:5;">8</span>
<span style="left:31.00px;top:586.53px;font-size:29.5px;color:#5d5b59;z-index:5;">9</span>
<span style="left:22.00px;top:631.53px;font-size:29.5px;color:#5d5b59;z-index:5;"><svg class="o" viewBox="0 -0.8 0.556 0.8"><path d="M0.390 0V-0.716H0.328C0.280 -0.64 0.200 -0.585 0.105 -0.548V-0.463C0.170 -0.488 0.250 -0.533 0.302 -0.585V0Z"/></svg>0</span>
<span style="left:20.00px;top:676.93px;font-size:29.5px;color:#217346;z-index:5;font-weight:700;transform:scaleX(1.1000);"><svg class="o" viewBox="0 -0.8 0.556 0.8"><path d="M0.420 0V-0.716H0.328C0.310 -0.64 0.230 -0.585 0.135 -0.548V-0.428C0.200 -0.453 0.280 -0.498 0.272 -0.550V0Z"/></svg><svg class="o" viewBox="0 -0.8 0.556 0.8"><path d="M0.420 0V-0.716H0.328C0.310 -0.64 0.230 -0.585 0.135 -0.548V-0.428C0.200 -0.453 0.280 -0.498 0.272 -0.550V0Z"/></svg></span>
<span style="left:22.00px;top:721.53px;font-size:29.5px;color:#5d5b59;z-index:5;"><svg class="o" viewBox="0 -0.8 0.556 0.8"><path d="M0.390 0V-0.716H0.328C0.280 -0.64 0.200 -0.585 0.105 -0.548V-0.463C0.170 -0.488 0.250 -0.533 0.302 -0.585V0Z"/></svg>2</span>
<span style="left:22.00px;top:766.53px;font-size:29.5px;color:#5d5b59;z-index:5;"><svg class="o" viewBox="0 -0.8 0.556 0.8"><path d="M0.390 0V-0.716H0.328C0.280 -0.64 0.200 -0.585 0.105 -0.548V-0.463C0.170 -0.488 0.250 -0.533 0.302 -0.585V0Z"/></svg>3</span>
<span style="left:303.34px;top:225.86px;font-size:29.7px;color:#000;z-index:5;transform:scaleX(1.0322);">hex number to decimal number</span>
<span style="left:1025.27px;top:225.86px;font-size:29.7px;color:#000;z-index:5;transform:scaleX(1.0297);">decimal number to hex number</span>
<span style="left:231.47px;top:272.86px;font-size:29.7px;color:#000;z-index:5;transform:scaleX(1.0134);">Hex Number</span>
<span style="left:515.37px;top:272.86px;font-size:29.7px;color:#000;z-index:5;transform:scaleX(1.0164);">Decimal Number</span>
<span style="left:951.68px;top:272.86px;font-size:29.7px;color:#000;z-index:5;transform:scaleX(1.0122);">Hex Number</span>
<span style="left:1244.47px;top:272.86px;font-size:29.7px;color:#000;z-index:5;transform:scaleX(1.0164);">Decimal Number</span>
<span style="left:232.27px;top:317.86px;font-size:29.7px;color:#000;z-index:5;transform:scaleX(0.9290);">5C35</span>
<span style="left:231.67px;top:362.86px;font-size:29.7px;color:#000;z-index:5;transform:scaleX(0.9648);">B3D45</span>
<span style="left:232.08px;top:407.86px;font-size:29.7px;color:#000;z-index:5;transform:scaleX(0.8088);">FF</span>
<span style="left:232.60px;top:452.86px;font-size:29.7px;color:#000;z-index:5;transform:scaleX(0.9562);">45BD</span>
<span style="left:232.12px;top:497.86px;font-size:29.7px;color:#000;z-index:5;transform:scaleX(0.9755);">9D6</span>
<span style="left:231.85px;top:542.86px;font-size:29.7px;color:#000;z-index:5;transform:scaleX(0.9240);">E24</span>
<span style="left:231.79px;top:587.86px;font-size:29.7px;color:#000;z-index:5;transform:scaleX(0.9529);">F2A7</span>
<span style="left:713.16px;top:317.86px;font-size:29.7px;color:#000;z-index:5;transform:scaleX(0.9944);">23605</span>
<span style="left:696.19px;top:362.86px;font-size:29.7px;color:#000;z-index:5;transform:scaleX(1.0052);">736581</span>
<span style="left:746.26px;top:407.86px;font-size:29.7px;color:#000;z-index:5;transform:scaleX(0.9885);">255</span>
<span style="left:713.26px;top:452.86px;font-size:29.7px;color:#000;z-index:5;transform:scaleX(0.9931);">17853</span>
<span style="left:729.70px;top:497.86px;font-size:29.7px;color:#000;z-index:5;">2518</span>
<span style="left:729.60px;top:542.86px;font-size:29.7px;color:#000;z-index:5;transform:scaleX(1.0016);">3620</span>
<span style="left:713.22px;top:587.86px;font-size:29.7px;color:#000;z-index:5;transform:scaleX(1.0314);">62119</span>
<span style="left:1435.46px;top:317.86px;font-size:29.7px;color:#000;z-index:5;transform:scaleX(0.9944);">23605</span>
<span style="left:1418.49px;top:362.86px;font-size:29.7px;color:#000;z-index:5;transform:scaleX(1.0052);">736581</span>
<span style="left:1468.56px;top:407.86px;font-size:29.7px;color:#000;z-index:5;transform:scaleX(0.9885);">255</span>
<span style="left:1435.56px;top:452.86px;font-size:29.7px;color:#000;z-index:5;transform:scaleX(0.9931);">17853</span>
<span style="left:1452.00px;top:497.86px;font-size:29.7px;color:#000;z-index:5;">2518</span>
<span style="left:1452.00px;top:542.86px;font-size:29.7px;color:#000;z-index:5;">2620</span>
<span style="left:1435.52px;top:587.86px;font-size:29.7px;color:#000;z-index:5;transform:scaleX(1.0314);">62119</span>
<span style="left:161.00px;top:831.67px;font-size:20px;color:#3b3a39;z-index:8;-webkit-text-stroke:0.6px #3b3a39;transform:scaleX(1.0100);">Sheet<svg class="o" viewBox="0 -0.8 0.556 0.8"><path d="M0.390 0V-0.716H0.328C0.280 -0.64 0.200 -0.585 0.105 -0.548V-0.463C0.170 -0.488 0.250 -0.533 0.287 -0.585V0Z"/></svg></span>
<span style="left:20.58px;top:878.65px;font-size:17.9px;color:#4a4948;z-index:8;transform:scaleX(1.0207);">Calculation Mode: Automatic</span>
<span style="left:278.50px;top:878.65px;font-size:17.9px;color:#4a4948;z-index:8;transform:scaleX(0.9968);">Workbook Statistics</span>
<span style="left:1512.50px;top:878.65px;font-size:17.9px;color:#4a4948;z-index:8;transform:scaleX(0.9977);">Give Feedback to Microsoft</span>
<span style="left:1823.07px;top:878.65px;font-size:17.9px;color:#4a4948;z-index:8;transform:scaleX(0.9651);"><svg class="o" viewBox="0 -0.8 0.556 0.8"><path d="M0.390 0V-0.716H0.328C0.280 -0.64 0.200 -0.585 0.105 -0.548V-0.463C0.170 -0.488 0.250 -0.533 0.302 -0.585V0Z"/></svg>50%</span>
</body></html>
